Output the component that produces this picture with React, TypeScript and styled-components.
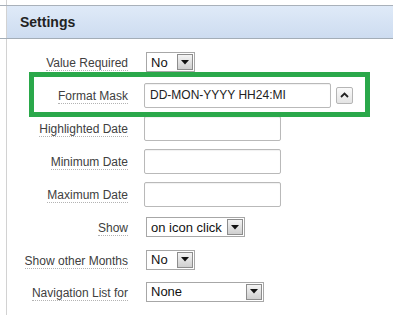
import React from "react";
import styled, { createGlobalStyle } from "styled-components";

const Global = createGlobalStyle`
  html, body { margin: 0; padding: 0; background: #fff; }
  body { font-family: "Liberation Sans", Arial, sans-serif; }
`;

const Page = styled.div`
  position: relative;
  width: 393px;
  height: 315px;
  overflow: hidden;
  padding-top: 5px;
  box-sizing: border-box;
  background: linear-gradient(to right, transparent 6px, #d2d2d2 6px, #d2d2d2 7px, transparent 7px);
`;

const Header = styled.div`
  height: 32px;
  border-top: 1px solid #a9b1ba;
  border-bottom: 1px solid #a3adb7;
  background-image: linear-gradient(to bottom, #dfeaf8, #cddcf0);
  background-repeat: no-repeat;
  background-position: 7px 0;
  background-size: calc(100% - 7px) 100%;
  display: flex;
  align-items: center;
  padding-left: 20px;
  font-size: 14px;
  font-weight: bold;
  color: #222;
`;

const Form = styled.div`
  padding-top: 6.5px;
  display: flex;
  flex-direction: column;
`;

const Row = styled.div<{ $h: number }>`
  height: ${(p) => p.$h}px;
  display: flex;
  align-items: center;
`;

const LabelCell = styled.div`
  width: 128px;
  text-align: right;
  flex-shrink: 0;
`;

const Label = styled.span`
  font-size: 12px;
  color: #404040;
  border-bottom: 1px dotted #b3b3b3;
`;

const FieldCell = styled.div`
  margin-left: 16px;
  display: flex;
  align-items: center;
  gap: 4px;
`;

const TextInput = styled.div<{ $w: number }>`
  width: ${(p) => p.$w}px;
  height: 25px;
  box-sizing: border-box;
  border: 1px solid #b9b9b9;
  border-radius: 2px;
  box-shadow: inset 0 1px 1px rgba(0, 0, 0, 0.06);
  background: #fff;
  display: flex;
  align-items: center;
  padding-left: 5px;
  font-size: 12px;
  color: #222;
`;

const SmallButton = styled.div`
  width: 17px;
  height: 17px;
  box-sizing: border-box;
  border: 1px solid #b5b5b5;
  border-radius: 2px;
  background: linear-gradient(to bottom, #fafafa, #e4e4e4);
  display: flex;
  align-items: center;
  justify-content: center;
  margin-left: 1px;
`;

const SelectBox = styled.div<{ $w: number }>`
  width: ${(p) => p.$w}px;
  height: 20px;
  margin-left: 2px;
  box-sizing: border-box;
  border: 1px solid #a7a7a7;
  background: #fff;
  display: flex;
  align-items: center;
  justify-content: space-between;
  padding-left: 4px;
  padding-right: 1px;
  font-size: 13px;
  color: #111;
`;

const DropButton = styled.div`
  width: 16px;
  height: 16px;
  box-sizing: border-box;
  border: 1px solid #8d8d8d;
  background: linear-gradient(to bottom, #f4f4f4, #cfcfcf);
  display: flex;
  align-items: center;
  justify-content: center;
`;

const Highlight = styled.div`
  position: absolute;
  left: 29px;
  top: 72px;
  width: 341px;
  height: 45px;
  box-sizing: border-box;
  border: 5px solid #2aa84a;
  pointer-events: none;
`;

const Down = () => (
  <svg width="8" height="5" viewBox="0 0 8 5">
    <path d="M0 0 H8 L4 4.5 Z" fill="#111" />
  </svg>
);

const Up = () => (
  <svg width="9" height="6" viewBox="0 0 9 6">
    <path d="M1 5 L4.5 1.5 L8 5" fill="none" stroke="#222" strokeWidth="1.8" />
  </svg>
);

const Select = ({ value, w }: { value: string; w: number }) => (
  <SelectBox $w={w}>
    <span>{value}</span>
    <DropButton>
      <Down />
    </DropButton>
  </SelectBox>
);

type Field =
  | { kind: "select"; label: string; value: string; w: number; h: number }
  | { kind: "input"; label: string; value?: string; w: number; h: number; button?: boolean };

const fields: Field[] = [
  { kind: "select", label: "Value Required", value: "No", w: 49, h: 33 },
  { kind: "input", label: "Format Mask", value: "DD-MON-YYYY HH24:MI", w: 187, h: 33, button: true },
  { kind: "input", label: "Highlighted Date", w: 137, h: 33 },
  { kind: "input", label: "Minimum Date", w: 137, h: 33 },
  { kind: "input", label: "Maximum Date", w: 137, h: 33 },
  { kind: "select", label: "Show", value: "on icon click", w: 99, h: 33 },
  { kind: "select", label: "Show other Months", value: "No", w: 49, h: 32 },
  { kind: "select", label: "Navigation List for", value: "None", w: 118, h: 32 },
];

export default function App() {
  return (
    <>
      <Global />
      <Page>
        <Header>Settings</Header>
        <Form>
          {fields.map((f) => (
            <Row key={f.label} $h={f.h}>
              <LabelCell>
                <Label>{f.label}</Label>
              </LabelCell>
              <FieldCell>
                {f.kind === "select" ? (
                  <Select value={f.value} w={f.w} />
                ) : (
                  <>
                    <TextInput $w={f.w}>{f.value}</TextInput>
                    {f.button && (
                      <SmallButton>
                        <Up />
                      </SmallButton>
                    )}
                  </>
                )}
              </FieldCell>
            </Row>
          ))}
        </Form>
        <Highlight />
      </Page>
    </>
  );
}
